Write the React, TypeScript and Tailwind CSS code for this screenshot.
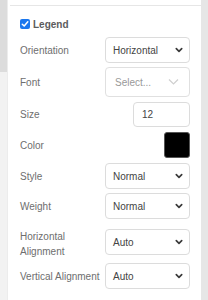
import React from "react";

const Chevron = () => (
  <svg width="8" height="6" viewBox="0 0 8 6" className="absolute right-[6px] top-1/2 -translate-y-1/2">
    <path d="M1.3 1.7 L4 4.3 L6.7 1.7" fill="none" stroke="#3a3a3a" strokeWidth="1.7" strokeLinecap="round" strokeLinejoin="round" />
  </svg>
);

const Select = ({ value }: { value: string }) => (
  <div className="relative w-[85px] h-[26px] border border-[#dcdcdc] rounded-[4px] bg-white flex items-center pl-[7px] text-[10px] text-[#444]">
    {value}
    <Chevron />
  </div>
);

const Row = ({ label, children, cls }: { label: string; children: React.ReactNode; cls: string }) => (
  <div className={`flex items-center ${cls}`}>
    <div className="w-[85px] text-[10px] leading-[15px] text-[#6e6e6e]">{label}</div>
    <div className="flex-1 flex justify-end">{children}</div>
  </div>
);

export default function App() {
  return (
    <div className="w-[208px] h-[300px] flex bg-white overflow-hidden font-['Liberation_Sans',Arial,sans-serif]">
      <div className="w-[7px] flex flex-col bg-[#f2f2f2]">
        <div className="h-[72px] bg-[#dcdcdc]" />
      </div>
      <div className="w-[1px] bg-[#ececec]" />
      <div className="w-[193px] flex flex-col">
        <div className="h-[5px]" />
        <div className="ml-[2px] border-t border-[#e6e6e6]" />
        <div className="pl-[12px] pr-[11px] flex flex-col">
          <div className="mt-[12px] h-[12px] flex items-center gap-[3px]">
            <div className="w-[10px] h-[10px] rounded-[2px] bg-[#1a77ee] flex items-center justify-center">
              <svg width="8" height="8" viewBox="0 0 8 8">
                <path d="M1.3 4.2 L3.2 6 L6.8 1.8" fill="none" stroke="white" strokeWidth="1.5" strokeLinecap="round" strokeLinejoin="round" />
              </svg>
            </div>
            <span className="text-[10px] font-bold text-[#5c5c5c]">Legend</span>
          </div>
          <Row label="Orientation" cls="mt-[7px] h-[26px]">
            <Select value="Horizontal" />
          </Row>
          <Row label="Font" cls="mt-[4px] h-[30px]">
            <div className="relative w-[85px] h-[30px] border border-[#e0e0e0] rounded-[4px] bg-white flex items-center pl-[9px] text-[10px] text-[#999]">
              Select...
              <svg width="11" height="7" viewBox="0 0 11 7" className="absolute right-[10px] top-1/2 -translate-y-1/2">
                <path d="M1 1 L5.5 5.5 L10 1" fill="none" stroke="#cfcfcf" strokeWidth="1.2" />
              </svg>
            </div>
          </Row>
          <Row label="Size" cls="mt-[5px] h-[25px]">
            <div className="w-[57px] h-[25px] border border-[#dcdcdc] rounded-[4px] bg-white flex items-center pl-[8px] text-[10px] text-[#444]">
              12
            </div>
          </Row>
          <Row label="Color" cls="mt-[5px] h-[26px]">
            <div className="w-[26px] h-[26px] rounded-[3px] bg-black border border-[#555]" />
          </Row>
          <Row label="Style" cls="mt-[5px] h-[26px]">
            <Select value="Normal" />
          </Row>
          <Row label="Weight" cls="mt-[4px] h-[26px]">
            <Select value="Normal" />
          </Row>
          <div className="flex items-start mt-[10px]">
            <div className="w-[85px] text-[10px] leading-[15px] text-[#6e6e6e]">Horizontal Alignment</div>
            <div className="flex-1 flex justify-end">
              <Select value="Auto" />
            </div>
          </div>
          <Row label="Vertical Alignment" cls="mt-[4px] h-[26px]">
            <Select value="Auto" />
          </Row>
        </div>
      </div>
      <div className="w-[7px] bg-[#e6e6e6]" />
    </div>
  );
}
